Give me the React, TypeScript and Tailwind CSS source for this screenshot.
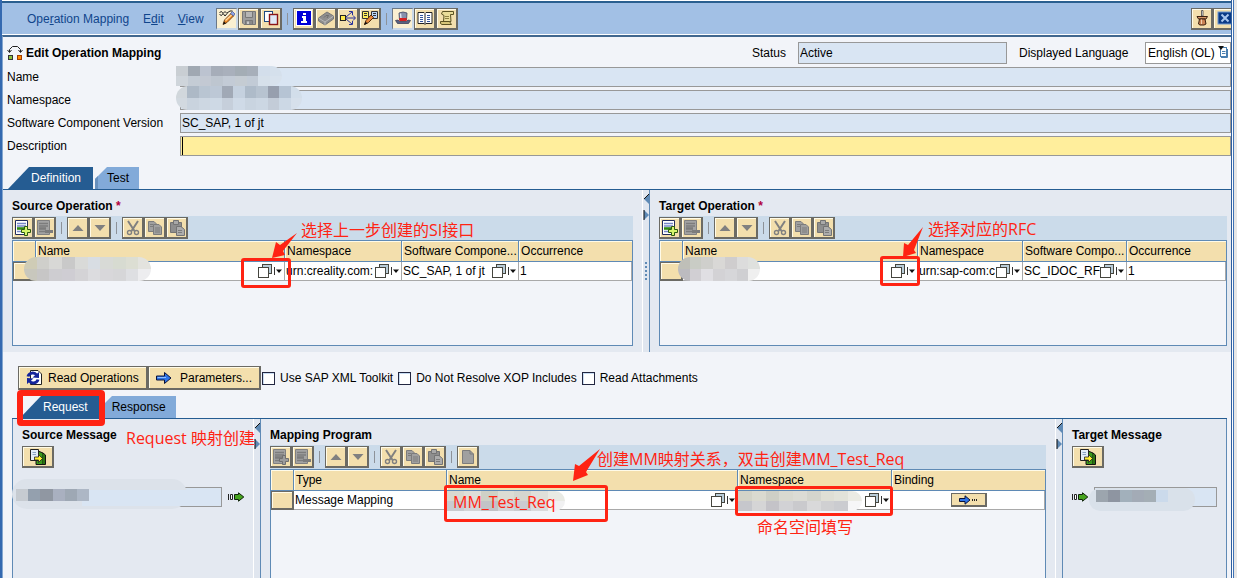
import type { ReactNode } from "react"

const Svg = ({ w = 16, h = 16, children }: { w?: number; h?: number; children: ReactNode }) => (
  <svg width={w} height={h} viewBox={`0 0 ${w} ${h}`} className="block shrink-0" aria-hidden="true">
    {children}
  </svg>
)

const DisplayEditIcon = () => (
  <Svg>
    <path d="M0.5 2.5L2.5 1.5L4 3.5L2.5 5.5L0.5 4.5M4 3.5L6 1.5L8 3.5L6 6L4.5 4M8 3L11 1H13.5" fill="none" stroke="#222" />
    <path d="M4 14.5L5.5 10L12 3.5L14.5 6L8 12.5Z" fill="#f08a24" stroke="#5a2c08" strokeWidth="0.8" />
    <path d="M6.5 10.5L13 4.5" stroke="#ffd9a0" strokeWidth="1.4" />
    <path d="M11.5 3.5L13.5 1.5L16 4L14.5 6Z" fill="#8fa6e8" stroke="#2b3c80" strokeWidth="0.6" />
    <path d="M4 14.5L5 11.5L7 13.5Z" fill="#111" />
  </Svg>
)

const SaveIcon = () => (
  <Svg>
    <path d="M1.5 1.5H14.5V14.5H3L1.5 13Z" fill="#9d9d9d" stroke="#777" />
    <path d="M4.5 1.5H11.5V7.5H4.5Z" fill="#b5b5b5" stroke="#777" />
    <path d="M4.5 10.5H11.5V14.5H4.5Z" fill="#8a8a8a" stroke="#777" />
    <path d="M6 11.5H8V14H6Z" fill="#c9c9c9" />
  </Svg>
)

const CopyObjectIcon = () => (
  <Svg>
    <rect x="1.5" y="1.5" width="8" height="10" fill="#fff" stroke="#1f4a80" />
    <rect x="6.5" y="4.5" width="8" height="10" fill="#dfe9f5" stroke="#8c1515" strokeWidth="1.4" />
  </Svg>
)

const InfoIcon = () => (
  <Svg>
    <rect width="16" height="16" fill="#fff" />
    <rect x="1" y="1" width="14" height="14" fill="#0000d8" />
    <path d="M7 3H10V5H7ZM6 6H10V11H11V13H5V11H7V8H6Z" fill="#fff" />
  </Svg>
)

const BookIcon = () => (
  <Svg>
    <path d="M0.5 8L9 2L15.5 6V9L7 15L0.5 11Z" fill="#8f8f8f" stroke="#777" />
    <path d="M0.5 8L7 12L15.5 6M7 12V15" fill="none" stroke="#b9b9b9" />
    <path d="M6 7.5L8 5.5H10.5L9 8" fill="none" stroke="#6d6d6d" />
  </Svg>
)

const WhereUsedIcon = () => (
  <Svg>
    <path d="M6 8H15M6 7L12 2M6 9L12 14" stroke="#26319e" />
    <path d="M9 1.5H12.5V5M9 14.5H12.5V11M13 5.5L15.5 8L13 10.5" fill="none" stroke="#26319e" />
    <rect x="0.5" y="5.5" width="5" height="5" fill="#ffe94a" stroke="#222" />
  </Svg>
)

const DependenciesIcon = () => (
  <Svg>
    <path d="M0.5 1.5H6.5V8.5H0.5Z" fill="#ffed5c" stroke="#333" />
    <path d="M9.5 1.5H15.5V8.5H9.5Z" fill="#b9d6f7" stroke="#333" />
    <path d="M2 3.5H5M2 5.5H5M11 3.5H14M11 5.5H14" stroke="#333" />
    <path d="M2.5 14.5L4 10.5L9 5L11.5 7.5L6.5 12.5Z" fill="#e98a3c" stroke="#5a2c08" />
    <path d="M2 15L3.5 11.5L5.5 13.5Z" fill="#111" />
  </Svg>
)

const HatIcon = () => (
  <Svg>
    <path d="M4 3L8 2L12 3L11.5 10H4.5Z" fill="#8790ab" stroke="#3c4360" strokeWidth="0.8" />
    <path d="M5.5 3.5L6 9" stroke="#e2e6f2" strokeWidth="1.4" />
    <path d="M4.3 8H11.7V11H4.3Z" fill="#d62020" />
    <path d="M0.5 10.5L3 10L4.5 11.5H11.5L13 10L15.5 10.5L13.5 13.5H2.5Z" fill="#596283" stroke="#2c324a" strokeWidth="0.7" />
  </Svg>
)

const OpenBookIcon = () => (
  <Svg>
    <path d="M1 2.5H7L8 3.5L9 2.5H15V13.5H9L8 14.5L7 13.5H1Z" fill="#fff" stroke="#222" />
    <path d="M8 4V14" stroke="#222" />
    <path d="M3 5.5H6M3 7.5H6M3 9.5H6M3 11.5H6M10 5.5H13M10 7.5H13M10 9.5H13M10 11.5H13" stroke="#31539c" />
  </Svg>
)

const ScrollIcon = () => (
  <Svg>
    <path d="M3.5 1.5H14.5V4.5H11.5L12 11.5H4.5L5 5.5L2.5 4Z" fill="#e9dc98" stroke="#5b5223" />
    <path d="M1.5 11.5H10.5L12.5 14.5H3L1.5 13.5Z" fill="#d6c577" stroke="#5b5223" />
    <path d="M6 6.5H10M6 8.5H10" stroke="#8d8142" />
  </Svg>
)

const PinIcon = () => (
  <Svg>
    <path d="M7.5 0.5H9V6H7.5Z" fill="#f5f5f5" stroke="#444" strokeWidth="0.8" />
    <path d="M3 6.5H13.5L12 9H4.5Z" fill="#d99a6a" stroke="#3b2110" />
    <path d="M5.5 9H11L12 14L10 15H6L4.5 14Z" fill="#c98253" stroke="#3b2110" />
    <path d="M7.5 9.5V14" stroke="#f3cfae" />
  </Svg>
)

const CloseIcon = () => (
  <Svg>
    <rect x="2" y="2" width="14" height="12" fill="#0b3a86" stroke="#6f98d2" />
    <path d="M5.5 4.5L12.5 11.5M12.5 4.5L5.5 11.5" stroke="#a9c6ee" strokeWidth="2" />
  </Svg>
)

const MappingIcon = () => (
  <Svg>
    <path d="M2.5 7V4.5L5.5 1.5H10.5L13.5 4.5V7M0.5 5L2.5 7.5L4.5 5M11.5 5L13.5 7.5L15.5 5" fill="none" stroke="#222" />
    <rect x="1.5" y="10.5" width="4" height="4" fill="#8bbf3c" stroke="#333" />
    <rect x="10.5" y="10.5" width="4" height="4" fill="#ff8a00" stroke="#a33c00" />
  </Svg>
)

const RowIcon = ({ add, off }: { add?: boolean; off?: boolean }) => {
  const line = off ? "#808080" : "#222c5e"
  return (
    <Svg>
      <path d="M0.5 0.5H12.5V14.5H0.5Z" fill={off ? "#a3a3a3" : "#fff"} stroke={line} />
      <path d="M2 3.5H11M2 6H11M2 11.5H9" stroke={off ? "#7c7c7c" : "#7687c8"} strokeWidth="1.4" />
      <path d="M2 8.5H9" stroke={off ? "#7c7c7c" : "#2f8a12"} strokeWidth="2.6" />
      {add ? (
        <path
          d="M9.5 6.5H12.5V9.5H15.5V12.5H12.5V15.5H9.5V12.5H6.5V9.5H9.5Z"
          fill={off ? "#9c9c9c" : "#d6f56e"}
          stroke={off ? "#707070" : "#2b5a10"}
        />
      ) : (
        <path d="M8 10H16V13H8Z" fill="#7c7c7c" />
      )}
    </Svg>
  )
}

const UpIcon = () => (
  <Svg>
    <path d="M8 5L13.5 11H2.5Z" fill="#808080" />
  </Svg>
)

const DownIcon = () => (
  <Svg>
    <path d="M8 11L13.5 5H2.5Z" fill="#808080" />
  </Svg>
)

const CutIcon = () => (
  <Svg>
    <path d="M3 1L9.5 11M13 1L6.5 11" stroke="#808080" strokeWidth="2" />
    <circle cx="4.5" cy="12.5" r="2" fill="none" stroke="#808080" strokeWidth="1.4" />
    <circle cx="11.5" cy="12.5" r="2" fill="none" stroke="#808080" strokeWidth="1.4" />
  </Svg>
)

const CopyIcon = () => (
  <Svg>
    <path d="M1.5 1.5H7L9.5 4V11.5H1.5Z" fill="#a0a0a0" stroke="#7c7c7c" />
    <path d="M6.5 4.5H12L14.5 7V14.5H6.5Z" fill="#a0a0a0" stroke="#7c7c7c" />
    <path d="M8 8H13M8 10H13M8 12H13M3 4.5H6M3 6.5H6" stroke="#7c7c7c" />
  </Svg>
)

const PasteIcon = () => (
  <Svg>
    <path d="M1.5 2.5H12.5V12.5H1.5Z" fill="#8e8e8e" stroke="#747474" />
    <path d="M4.5 0.5H9.5V4.5H4.5Z" fill="#a8a8a8" stroke="#747474" />
    <path d="M7.5 6.5H12L15.5 9.5V15.5H7.5Z" fill="#acacac" stroke="#747474" />
    <path d="M9 10.5H13M9 12.5H13" stroke="#7c7c7c" />
  </Svg>
)

const PageIcon = () => (
  <Svg>
    <path d="M2.5 1.5H10L13.5 5V14.5H2.5Z" fill="#a0a0a0" stroke="#7c7c7c" />
    <path d="M10 1.5V5H13.5" fill="none" stroke="#7c7c7c" />
  </Svg>
)

const RefreshIcon = () => (
  <Svg>
    <path d="M4.5 0.5H12L15.5 4V14.5H4.5Z" fill="#fff" stroke="#222" />
    <path d="M2 6.5C3 2.5 8.5 2 10.5 5M12 9.5C11 13.5 5.5 14 3.5 11" fill="none" stroke="#14249c" strokeWidth="3" />
    <path d="M6.5 7.5L13 8V2ZM7.5 8.5L1 8V14Z" fill="#14249c" />
  </Svg>
)

const BlueArrowIcon = () => (
  <Svg>
    <path d="M0.5 6H8.5V2.5L15 8L8.5 13.5V10H0.5Z" fill="#2f74e8" stroke="#0a1238" />
    <path d="M1.5 7.5H10" stroke="#8fc0ff" />
  </Svg>
)

const SelectMessageIcon = () => (
  <Svg>
    <path d="M8 2L13 4V15.5H6V12" fill="#3b9a1c" stroke="#111" />
    <path d="M13 4L15.5 6V15.5H13" fill="#2c7413" stroke="#111" />
    <path d="M0.5 0.5H8.5V11.5H0.5Z" fill="#e3edf8" stroke="#222" />
    <path d="M2.5 3.5H6M2.5 5.5H6" stroke="#8aa3c4" />
    <path d="M4.5 8H8.5V5.5L12.5 9.5L8.5 13.5V11H4.5Z" fill="#ffee35" stroke="#222" strokeWidth="0.8" />
  </Svg>
)

const FlowArrowIcon = () => (
  <Svg w={17} h={10}>
    <path d="M0.5 2V8" stroke="#222" />
    <path d="M2.5 2.5H4.5V7.5H2.5Z" fill="#fff" stroke="#222" />
    <path d="M6.5 2.5H10.5V0.8L15.8 5L10.5 9.2V7.5H6.5Z" fill="#46a41e" stroke="#10240a" />
  </Svg>
)

// Search help shown at the right end of an editable cell
const SearchHelp = ({ label }: { label: string }) => (
  <button type="button" aria-label={`${label} search help`} className="shrink-0">
    <Svg w={26} h={15}>
      <rect x="4.5" y="0.5" width="9" height="9" fill="#b9ccd8" stroke="#45453e" />
      <rect x="0.5" y="3.5" width="10" height="10" fill="#fff" stroke="#45453e" />
      <path d="M16.5 3V11" stroke="#333" />
      <path d="M18 5.5H24L21 9Z" fill="#111" />
    </Svg>
  </button>
)

type ToolProps = { label: string; icon: ReactNode; pressed?: boolean; wide?: boolean }

const Tool = ({ label, icon, pressed, wide }: ToolProps) => (
  <button
    type="button"
    aria-label={label}
    className={`flex h-[22px] shrink-0 items-center justify-center overflow-hidden border-t border-r-2 border-b-2 border-l ${wide ? "w-8" : "w-[22px]"} ${
      pressed
        ? "border-t-[#6b7888] border-r-[#c9d8e8] border-b-[#c9d8e8] border-l-[#6b7888] bg-[#faf0d2]"
        : "border-[#6b6a64] bg-[#f3dfad] shadow-[inset_1px_1px_0_#fffbe8]"
    }`}
  >
    {icon}
  </button>
)

const Separator = () => (
  <span className="flex h-[22px] w-[11px] shrink-0 items-center justify-center">
    <span className="h-3 w-px bg-[#8d9299]" />
  </span>
)

const TableTools = ({ disabled }: { disabled?: boolean }) => (
  <div className="flex h-6 overflow-hidden bg-[#cbdbea] pt-px">
    <Tool label="Add row" icon={<RowIcon add off={disabled} />} />
    <Tool label="Remove row" icon={<RowIcon off />} />
    <Separator />
    <Tool label="Move up" icon={<UpIcon />} />
    <Tool label="Move down" icon={<DownIcon />} />
    <Separator />
    <Tool label="Cut" icon={<CutIcon />} />
    <Tool label="Copy" icon={<CopyIcon />} />
    <Tool label="Paste" icon={<PasteIcon />} />
    {disabled && (
      <>
        <Separator />
        <Tool label="New" icon={<PageIcon />} />
      </>
    )}
  </div>
)

// Blurred-out value: rows of flat colour blocks in a rounded smear
const Smear = ({ rows, className }: { rows: string[][]; className: string }) => (
  <span className={`pointer-events-none absolute flex flex-col overflow-hidden ${className}`}>
    {rows.map((row, i) => (
      <span key={i} className="flex flex-1">
        {row.map((color, j) => (
          <span key={j} className="flex-1" style={{ backgroundColor: color }} />
        ))}
      </span>
    ))}
  </span>
)

const fieldClass = "block h-5 w-full min-w-0 border border-[#989898] bg-[#d9e5f3] px-px text-xs outline-none"

type FieldProps = { id: string; label: string; value?: string; children?: ReactNode; edit?: boolean }

const Field = ({ id, label, value = "", children, edit }: FieldProps) => (
  <div className="flex items-center">
    <label htmlFor={id} className="w-[173px] shrink-0">
      {label}
    </label>
    <div className="relative flex-1">
      <input
        id={id}
        defaultValue={value}
        readOnly={!edit}
        className={edit ? "block h-5 w-full border border-[#989898] bg-[#ffee9c] px-px text-xs outline-none" : fieldClass}
      />
      {children}
    </div>
  </div>
)

type TabProps = { label: string; active?: boolean }

const Tab = ({ label, active }: TabProps) => (
  <button type="button" role="tab" aria-selected={!!active} className="flex h-[22px]">
    <svg width={active ? 21 : 12} height="22" viewBox={active ? "0 0 21 22" : "0 0 12 22"} aria-hidden="true">
      {active ? (
        <path d="M0 22L21 0V22Z" fill="#255c92" />
      ) : (
        <>
          <path d="M0 12L12 0V22H0Z" fill="#82aad9" />
          <path d="M0 12L3 9V22H0Z" fill="#6890bd" />
        </>
      )}
    </svg>
    <span
      className={`flex h-[22px] items-center ${active ? "bg-[#255c92] pr-3 pl-[2px] text-white" : "bg-[#82aad9] pr-[10px] text-black"}`}
    >
      {label}
    </span>
  </button>
)

const Splitter = ({ dots }: { dots?: boolean }) => (
  <div className="relative w-2 shrink-0 border-r border-l border-r-[#5f8ab5] border-l-white bg-[#e0e6ef]">
    <svg width="6" height="27" viewBox="0 0 6 27" className="absolute top-1 right-0" aria-hidden="true">
      <path d="M6 0L1 5L6 10Z" fill="#5f8ab5" />
      <path d="M6 0L1 5" stroke="#111" fill="none" />
      <path d="M1 16L6 21L1 26Z" fill="#5f8ab5" />
      <path d="M1 16V26" stroke="#111" />
    </svg>
    {dots && (
      <div className="absolute inset-0 flex flex-col items-center justify-center gap-[2px]">
        {[0, 1, 2, 3, 4].map(i => (
          <span key={i} className="h-[2px] w-[2px] bg-[#5f8ab5]" />
        ))}
      </div>
    )}
  </div>
)

const Th = ({ children, width = "" }: { children?: ReactNode; width?: string }) => (
  <th
    className={`h-[21px] border-r border-b border-[#5f8ab5] bg-[#f3dfad] p-0 pl-[2px] text-left font-normal whitespace-nowrap shadow-[inset_1px_1px_0_#fffbe8] last:border-r-0 ${width}`}
  >
    {children}
  </th>
)

const Td = ({ children }: { children?: ReactNode }) => (
  <td className="relative h-[19px] border-r border-b border-[#a9a9a9] bg-white p-0 pl-px">{children}</td>
)

const RowHead = () => (
  <td className="h-[19px] border-t border-r-2 border-b-2 border-l border-[#6b6a64] bg-[#f3dfad] p-0 shadow-[inset_1px_1px_0_#fffbe8]" />
)

const CellValue = ({ value = "", label }: { value?: string; label: string }) => (
  <div className="flex items-center">
    <span className="min-w-0 flex-1 whitespace-nowrap">{value}</span>
    <SearchHelp label={label} />
  </div>
)

const TableFrame = ({ children, className }: { children: ReactNode; className: string }) => (
  <div className={`border border-[#5f8ab5] bg-[#f2f4f9] ${className}`}>
    <table className="w-full table-fixed border-separate border-spacing-0">{children}</table>
  </div>
)

type OperationProps = {
  title: string
  namespace: string
  component: string
  componentTitle: string
  widths: string[]
  smear: ReactNode
}

const Operation = ({ title, namespace, component, componentTitle, widths, smear }: OperationProps) => (
  <>
    <h2 className="pt-[6px] text-xs leading-5 font-bold">
      {title} <span className="text-[#b00040]">*</span>
    </h2>
    <TableTools />
    <TableFrame className="h-[106px]">
      <thead>
        <tr>
          <Th width="w-[23px]" />
          <Th>Name</Th>
          <Th width={widths[0]}>Namespace</Th>
          <Th width={widths[1]}>{componentTitle}</Th>
          <Th width={widths[2]}>Occurrence</Th>
        </tr>
      </thead>
      <tbody>
        <tr>
          <RowHead />
          <Td>
            <CellValue label="Name" />
            {smear}
          </Td>
          <Td>
            <CellValue value={namespace} label="Namespace" />
          </Td>
          <Td>
            <CellValue value={component} label="Software component" />
          </Td>
          <Td>1</Td>
        </tr>
      </tbody>
    </TableFrame>
  </>
)

const Note = ({ children, className }: { children: ReactNode; className: string }) => (
  <p
    className={`pointer-events-none absolute font-['Open_Sans','Noto_Sans_CJK_SC',sans-serif] text-base leading-6 whitespace-nowrap text-[#ff2313] ${className}`}
  >
    {children}
  </p>
)

const Frame = ({ className }: { className: string }) => (
  <span className={`pointer-events-none absolute rounded-[3px] border-3 border-[#ff2313] ${className}`} />
)

const Pointer = ({ w, h, points, className }: { w: number; h: number; points: string; className: string }) => (
  <svg width={w} height={h} viewBox={`0 0 ${w} ${h}`} className={`pointer-events-none absolute ${className}`} aria-hidden="true">
    <polygon points={points} fill="#ff2313" />
  </svg>
)

const Check = ({ id, label }: { id: string; label: string }) => (
  <div className="flex items-center gap-[5px]">
    <input
      id={id}
      type="checkbox"
      className="h-[13px] w-[13px] appearance-none border border-[#222640] bg-white shadow-[inset_1px_1px_0_#c8dcf2] checked:bg-[#255c92]"
    />
    <label htmlFor={id}>{label}</label>
  </div>
)

const actionClass =
  "flex h-6 items-center border-t border-r-2 border-b-2 border-l border-[#6b6a64] bg-[#f3dfad] pl-[7px] shadow-[inset_1px_1px_0_#fffbe8]"

const App = () => (
  <div className="flex min-h-screen overflow-hidden bg-white font-['Liberation_Sans',Arial,sans-serif] text-xs leading-4 text-black">
    <div className="flex min-w-0 flex-1 flex-col border-l-2 border-[#3469b0] pt-px">
      <header className="flex h-[34px] items-center overflow-hidden border-t-2 border-b border-t-[#2a5f8f] border-b-white bg-[#a2c0e5] pl-[25px]">
        <nav className="flex w-[189px] shrink-0 gap-[14px] text-[#10458c]">
          <a href="#mapping">Ope<u>r</u>ation Mapping</a>
          <a href="#edit">E<u>d</u>it</a>
          <a href="#view"><u>V</u>iew</a>
        </nav>
        <div className="flex flex-1">
          <Tool label="Display and edit" icon={<DisplayEditIcon />} pressed />
          <Tool label="Save" icon={<SaveIcon />} />
          <Tool label="Copy object" icon={<CopyObjectIcon />} />
          <Separator />
          <Tool label="Information" icon={<InfoIcon />} />
          <Tool label="Documentation" icon={<BookIcon />} />
          <Tool label="Where used" icon={<WhereUsedIcon />} />
          <Tool label="Dependencies" icon={<DependenciesIcon />} />
          <Separator />
          <Tool label="Header" icon={<HatIcon />} pressed />
          <Tool label="Properties" icon={<OpenBookIcon />} />
          <Tool label="History" icon={<ScrollIcon />} />
        </div>
        <div className="-mr-1 flex">
          <Tool label="Pin" icon={<PinIcon />} />
          <Tool label="Close" icon={<CloseIcon />} />
        </div>
      </header>

      <main className="flex flex-1 flex-col border-t-2 border-l border-t-[#41678f] border-l-[#84a7d0] bg-[#f2f4f9]">
        <section className="flex flex-col gap-[3px] pt-[5px] pl-1">
          <div className="flex h-[22px] items-center">
            <MappingIcon />
            <h1 className="flex-1 pl-[3px] text-xs font-bold">Edit Operation Mapping</h1>
            <label htmlFor="status" className="pr-3">Status</label>
            <input
              id="status"
              readOnly
              defaultValue="Active"
              className="h-[22px] w-[209px] border border-[#989898] bg-[#d9e5f3] px-px text-xs outline-none"
            />
            <label htmlFor="language" className="w-[138px] pl-3">Displayed Language</label>
            <div className="relative">
              <select
                id="language"
                className="block h-[22px] w-[86px] appearance-none border border-[#989898] bg-white pl-[2px] text-xs outline-none"
              >
                <option>English (OL)</option>
              </select>
              <svg width="10" height="12" viewBox="0 0 10 12" className="pointer-events-none absolute top-1 right-[3px]" aria-hidden="true">
                <rect x="2.5" y="1.5" width="6" height="9" fill="#fff" stroke="#4a7fb0" />
                <path d="M4 5.5H7.5M4 7.5H7.5M9.5 3V11.5H3" stroke="#4a7fb0" fill="none" />
                <path d="M0 0H6L3 4Z" fill="#111" />
              </svg>
            </div>
          </div>
          <Field id="name" label="Name">
            <Smear
              className="-top-px -left-1 h-5 w-[106px] rounded-r-full"
              rows={[
                ["#c9ced3", "#a0a8b2", "#bcc3d0", "#a6adb9", "#a9b0bc", "#a4adb5", "#a7afba", "#d3deeb", "#d5e0ec"],
                ["#cfd5db", "#c4ccd5", "#c3c9d3", "#bec6d0", "#c3cbd6", "#c5ccd3", "#c2cbd6", "#d6e0ea", "#d8e2ed"],
              ]}
            />
          </Field>
          <Field id="namespace" label="Namespace">
            <Smear
              className="-top-1 -left-1 h-6 w-[126px] rounded-full"
              rows={[
                ["#d1d7dc", "#adb9c6", "#b9c5d2", "#bdc8d6", "#a1a9b6", "#c5d1df", "#aebbc9", "#b7c3d0", "#979fae", "#b6c4d4", "#d2deea"],
                ["#d2d9e0", "#c9d3de", "#cdd7e2", "#ced9e5", "#c6cfdb", "#cfdae7", "#c9d4e0", "#ccd7e3", "#c3ccd8", "#ccd8e5", "#d6e0eb"],
              ]}
            />
          </Field>
          <Field id="swcv" label="Software Component Version" value="SC_SAP, 1 of jt" />
          <Field id="description" label="Description" edit>
            <span className="pointer-events-none absolute top-[1px] left-[2px] h-[18px] w-px bg-black" />
          </Field>
        </section>

        <div role="tablist" className="mt-[11px] flex gap-[2px] border-b border-[#255c92] pl-[5px]">
          <Tab label="Definition" active />
          <Tab label="Test" />
        </div>

        <section className="grid grid-cols-[minmax(0,11fr)_8px_minmax(0,10fr)] bg-[#e4e9f1]">
          <div className="relative pr-[9px] pb-[6px] pl-[9px]">
            <Operation
              title="Source Operation"
              namespace="urn:creality.com:"
              component="SC_SAP, 1 of jt"
              componentTitle="Software Compone..."
              widths={["w-[117px]", "w-[117px]", "w-[113px]"]}
              smear={
                <Smear
                  className="top-[-5px] left-[-12px] h-6 w-[127px] rounded-full"
                  rows={[
                    ["#cfccb6", "#cfcfcb", "#d8d8d6", "#c9c9c9", "#d9dad8", "#d8dde3", "#d8dad6", "#d7dbd1", "#dcded3", "#e3e3de"],
                    ["#c8c7bd", "#c7c6c6", "#cecdd1", "#cfcdd3", "#d4d3d6", "#dcdcdf", "#d8d7da", "#d6d6d8", "#dedfe2", "#ededef"],
                  ]}
                />
              }
            />
            <Note className="top-[28px] left-[298px]">选择上一步创建的SI接口</Note>
            <Pointer w={25} h={25} points="0,25 4,9 8,12 25,0 11,18 13,22" className="top-[43px] left-[269px]" />
            <Frame className="top-[68px] left-[238px] h-[30px] w-[50px]" />
          </div>
          <Splitter dots />
          <div className="relative pr-1 pb-[6px] pl-[9px]">
            <Operation
              title="Target Operation"
              namespace="urn:sap-com:c"
              component="SC_IDOC_RF"
              componentTitle="Software Compo..."
              widths={["w-[105px]", "w-[104px]", "w-[99px]"]}
              smear={
                <Smear
                  className="top-[-5px] left-[-5px] h-6 w-[82px] rounded-full"
                  rows={[
                    ["#bfbfb8", "#c9ccc5", "#cfcfcc", "#d9d8d6", "#cfcdce", "#dcdcdc", "#dfe1de"],
                    ["#bcbbbf", "#d1cfd3", "#e0dfe3", "#d3d2d5", "#d6d6d9", "#cfcfd2", "#efefef"],
                  ]}
                />
              }
            />
            <Note className="top-[27px] left-[278px]">选择对应的RFC</Note>
            <Pointer w={20} h={30} points="0,30 1,16 5,18 20,0 11,23 13,26" className="top-[37px] left-[253px]" />
            <Frame className="top-[66px] left-[230px] h-[30px] w-10" />
          </div>
        </section>

        <div className="mt-[14px] flex items-center pl-[15px]">
          <button type="button" className={`${actionClass} w-[130px] gap-[6px]`}>
            <RefreshIcon />
            Read Operations
          </button>
          <button type="button" className={`${actionClass} w-[113px] gap-2`}>
            <BlueArrowIcon />
            Parameters...
          </button>
          <div className="flex gap-[5px] pl-px">
            <Check id="toolkit" label="Use SAP XML Toolkit" />
            <Check id="xop" label="Do Not Resolve XOP Includes" />
            <Check id="attachments" label="Read Attachments" />
          </div>
        </div>

        <div className="relative mt-[6px] mr-1 ml-[9px]">
          <div role="tablist" className="flex border-b border-[#255c92] pl-2">
            <Tab label="Request" active />
            <Tab label="Response" />
          </div>
          <span className="pointer-events-none absolute top-[-6px] left-[5px] h-9 w-[88px] rounded-sm border-[6px] border-[#ff2313]" />
        </div>

        <section className="mr-1 ml-[9px] flex flex-1 border-r border-l border-[#5f8ab5] bg-[#e4e9f1]">
          <div className="relative w-[240px] shrink-0 pr-[31px] pl-[9px]">
            <h2 className="pt-[6px] pb-px text-xs leading-5 font-bold">Source Message</h2>
            <Tool label="Select source message" icon={<SelectMessageIcon />} wide />
            <div className="relative mt-[19px] flex items-center">
              <input aria-label="Source message" readOnly className={fieldClass} />
              <span className="pointer-events-none absolute -top-2 -left-[10px] h-[30px] w-[175px] rounded-r-full rounded-l-full bg-[#dce2ea]" />
              <span className="pointer-events-none absolute top-[3px] left-[60px] h-4 w-[120px] bg-[#d9e5f3]" />
              <Smear
                className="top-[2px] -left-[6px] h-3 w-[73px]"
                rows={[["#c6cbd1", "#94a0ae", "#9097a2", "#a9b0c0", "#9ea8b4", "#adb7c5"]]}
              />
              <span className="absolute -right-[23px]">
                <FlowArrowIcon />
              </span>
            </div>
            <Note className="top-[7px] left-[113px] z-10">Request 映射创建</Note>
          </div>
          <Splitter />
          <div className="relative flex min-w-0 flex-1 flex-col px-[9px]">
            <h2 className="pt-[6px] text-xs leading-5 font-bold">Mapping Program</h2>
            <TableTools disabled />
            <TableFrame className="min-h-[100px] flex-1 border-b-0">
              <thead>
                <tr>
                  <Th width="w-[23px]" />
                  <Th width="w-[153px]">Type</Th>
                  <Th>Name</Th>
                  <Th width="w-[154px]">Namespace</Th>
                  <Th width="w-[153px]">Binding</Th>
                </tr>
              </thead>
              <tbody>
                <tr>
                  <RowHead />
                  <Td>Message Mapping</Td>
                  <Td>
                    <CellValue label="Name" />
                    <Smear
                      className="top-0 left-0 h-5 w-[118px] rounded-r-xl"
                      rows={[
                        ["#d8d9d1", "#dedfd8", "#cfd1c6", "#dcdcd4", "#d5d6cf", "#e0e0da", "#e9eae4"],
                        ["#c9cbd0", "#d4d5d8", "#c2c3c7", "#d3d3d6", "#cbccd0", "#dadadd", "#f1f1f2"],
                      ]}
                    />
                  </Td>
                  <Td>
                    <CellValue label="Namespace" />
                    <Smear
                      className="top-0 left-0 h-5 w-[124px] rounded-r-xl"
                      rows={[
                        ["#d3d3c8", "#dadad0", "#cecfc6", "#d9d9d0", "#dcdcd5", "#d4d5cd", "#dfdfd5", "#e2e3da", "#ebebe4"],
                        ["#c6c7cc", "#d5d5d6", "#c4c3c8", "#d2d2d5", "#cacacd", "#d9d9da", "#d0d0d2", "#cbccd0", "#f6f6f7"],
                      ]}
                    />
                  </Td>
                  <Td>
                    <button
                      type="button"
                      aria-label="Binding"
                      className="mx-auto flex h-[14px] w-9 items-center justify-center gap-px border-t border-r-2 border-b-2 border-l border-[#6b6a64] bg-[#f3dfad]"
                    >
                      <svg width="12" height="10" viewBox="0 0 12 10" aria-hidden="true">
                        <path d="M0.5 3.5H6V0.8L11 5L6 9.2V6.5H0.5Z" fill="#2f74e8" stroke="#0a1238" />
                      </svg>
                      <svg width="6" height="2" viewBox="0 0 6 2" aria-hidden="true">
                        <path d="M0 0H1V2H0ZM2 0H3V2H2ZM4 0H5V2H4Z" fill="#222" />
                      </svg>
                    </button>
                  </Td>
                </tr>
              </tbody>
            </TableFrame>
            <Note className="top-[28px] left-[336px]">创建MM映射关系，双击创建MM_Test_Req</Note>
            <Pointer w={27} h={32} points="0,32 2,15 6,17 27,0 13,23 15,26" className="top-[30px] left-[312px]" />
            <Frame className="top-[66px] left-[183px] h-[37px] w-[164px]" />
            <Note className="top-[71px] left-[192px]">MM_Test_Req</Note>
            <Frame className="top-[67px] right-[162px] h-[30px] w-[158px]" />
            <Note className="top-[96px] right-[202px]">命名空间填写</Note>
          </div>
          <Splitter />
          <div className="w-[163px] shrink-0 pr-[9px] pl-[9px]">
            <h2 className="pt-[6px] pb-px text-xs leading-5 font-bold">Target Message</h2>
            <Tool label="Select target message" icon={<SelectMessageIcon />} wide />
            <div className="mt-[19px] flex items-center gap-[5px]">
              <FlowArrowIcon />
              <div className="relative flex-1">
                <input aria-label="Target message" readOnly className={fieldClass} />
                <span className="pointer-events-none absolute top-px -left-[5px] h-[23px] w-[106px] rounded-r-full rounded-l-full bg-[#d9e1ea]" />
                <Smear
                  className="top-[3px] left-[2px] h-3 w-[72px]"
                  rows={[["#9ca5ae", "#8e95a1", "#a2b0bb", "#a3abb6", "#a4aeb5", "#cbdaeb"]]}
                />
              </div>
            </div>
          </div>
        </section>
      </main>
    </div>
    <div className="w-[6px] shrink-0 border-l border-[#2f5f9f]">
      <div className="h-full border-l border-white bg-[#e6e6e6]">
        <div className="h-full w-px bg-[#3f72b5]" />
      </div>
    </div>
  </div>
)

export default App
